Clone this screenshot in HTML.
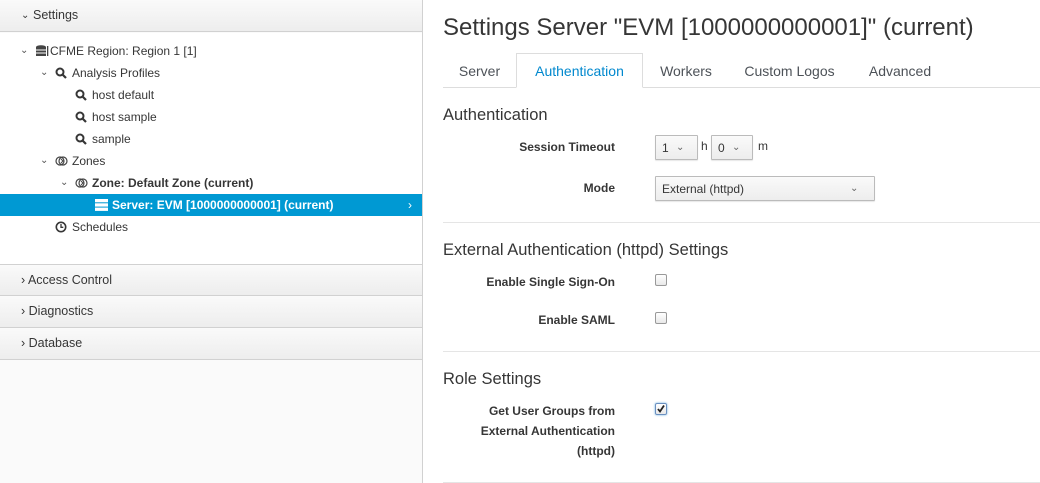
<!DOCTYPE html>
<html><head><style>
*{box-sizing:border-box;margin:0;padding:0}
body{width:1040px;height:483px;overflow:hidden;font-family:"Liberation Sans",sans-serif;font-size:12px;color:#363636;background:#fff;position:relative}
.left{position:absolute;left:0;top:0;width:423px;height:483px;background:#fafafa;border-right:1px solid #d1d1d1}
.hdr{position:absolute;left:0;width:422px;height:32px;background:linear-gradient(#fafafa,#ededed);border-bottom:1px solid #d1d1d1;line-height:31px;padding-left:21px;font-size:12.5px;color:#363636}
.hdr.t{border-top:1px solid #d1d1d1}
.tree{position:absolute;left:0;top:33px;width:422px;height:231px;background:#fff}
.row{position:absolute;left:0;width:422px;height:22px;line-height:22px;font-size:12px;white-space:nowrap}
.row svg{vertical-align:middle}
.sel{background:#0099d3;color:#fff;font-weight:bold}
.a{position:absolute;font-size:12px}
.ab{position:absolute;font-weight:bold;font-size:12px;text-align:right}
h1{position:absolute;left:443px;top:14px;font-weight:normal;font-size:24px;color:#363636;white-space:nowrap}
.tabs{position:absolute;left:443px;top:53px;width:597px;height:35px;border-bottom:1px solid #ddd}
.tab{position:absolute;top:1px;height:35px;line-height:35px;font-size:14px;color:#4d5258;text-align:center}
.tab.on{top:0;background:#fff;border:1px solid #ddd;border-bottom:1px solid #fff;color:#0088ce;height:35px}
h3{position:absolute;left:443px;font-weight:normal;font-size:16.5px;color:#363636}
.sl{position:absolute;height:25px;border:1px solid #bbb;border-radius:1px;background:linear-gradient(#fafafa,#ededed);box-shadow:0 1px 1px rgba(0,0,0,.1);line-height:24px;padding-left:6px;font-size:12px}
.sl i{position:absolute;top:0;font-style:normal;font-size:10px;color:#666}
.hr{position:absolute;left:443px;width:597px;height:1px;background:#e5e5e5}
.cb{position:absolute;width:12px;height:12px;border:1px solid #999;border-radius:2px;background:linear-gradient(#fff,#e8e8e8)}
</style></head><body>
<div class="left">
 <div class="hdr" style="top:0"><span style="font-size:10px;position:absolute;left:21px;top:0">&#8964;</span><span style="padding-left:12px">Settings</span></div>
 <div class="tree">
  <div class="row" style="top:7px"><span style="position:absolute;left:20px;font-size:10px;color:#555">&#8964;</span><svg style="position:absolute;left:35px;top:5px" width="14" height="12" viewBox="0 0 14 12"><ellipse cx="6" cy="2" rx="5" ry="1.8" fill="#444"/><rect x="1" y="2" width="10" height="9" fill="#444"/><path d="M1 5h10M1 8h10" stroke="#fff" stroke-width="1"/><rect x="12" y="1" width="1.3" height="10" fill="#444"/></svg><span style="position:absolute;left:50px">CFME Region: Region 1 [1]</span></div>
  <div class="row" style="top:29px"><span style="position:absolute;left:40px;font-size:10px;color:#555">&#8964;</span><svg style="position:absolute;left:55px;top:5px" width="12" height="12" viewBox="0 0 12 12"><circle cx="5" cy="5" r="3.5" fill="none" stroke="#363636" stroke-width="2"/><path d="M7.5 7.5l3.5 3.5" stroke="#363636" stroke-width="2.2"/></svg><span style="position:absolute;left:72px">Analysis Profiles</span></div>
  <div class="row" style="top:51px"><svg style="position:absolute;left:75px;top:5px" width="12" height="12" viewBox="0 0 12 12"><circle cx="5" cy="5" r="3.5" fill="none" stroke="#363636" stroke-width="2"/><path d="M7.5 7.5l3.5 3.5" stroke="#363636" stroke-width="2.2"/></svg><span style="position:absolute;left:92px">host default</span></div>
  <div class="row" style="top:73px"><svg style="position:absolute;left:75px;top:5px" width="12" height="12" viewBox="0 0 12 12"><circle cx="5" cy="5" r="3.5" fill="none" stroke="#363636" stroke-width="2"/><path d="M7.5 7.5l3.5 3.5" stroke="#363636" stroke-width="2.2"/></svg><span style="position:absolute;left:92px">host sample</span></div>
  <div class="row" style="top:95px"><svg style="position:absolute;left:75px;top:5px" width="12" height="12" viewBox="0 0 12 12"><circle cx="5" cy="5" r="3.5" fill="none" stroke="#363636" stroke-width="2"/><path d="M7.5 7.5l3.5 3.5" stroke="#363636" stroke-width="2.2"/></svg><span style="position:absolute;left:92px">sample</span></div>
  <div class="row" style="top:117px"><span style="position:absolute;left:40px;font-size:10px;color:#555">&#8964;</span><svg style="position:absolute;left:55px;top:5px" width="13" height="12" viewBox="0 0 13 12"><circle cx="5" cy="6" r="4" fill="none" stroke="#444" stroke-width="1.2"/><circle cx="8" cy="6" r="4" fill="none" stroke="#444" stroke-width="1.2"/><path d="M6 4l2 2-2 2" fill="none" stroke="#444"/></svg><span style="position:absolute;left:72px">Zones</span></div>
  <div class="row" style="top:139px;font-weight:bold"><span style="position:absolute;left:60px;font-size:10px;color:#555;font-weight:normal">&#8964;</span><svg style="position:absolute;left:75px;top:5px" width="13" height="12" viewBox="0 0 13 12"><circle cx="5" cy="6" r="4" fill="none" stroke="#444" stroke-width="1.2"/><circle cx="8" cy="6" r="4" fill="none" stroke="#444" stroke-width="1.2"/><path d="M6 4l2 2-2 2" fill="none" stroke="#444"/></svg><span style="position:absolute;left:92px">Zone: Default Zone (current)</span></div>
  <div class="row sel" style="top:161px"><svg style="position:absolute;left:95px;top:5px" width="13" height="12" viewBox="0 0 13 12"><rect x="0" y="0" width="13" height="3.3" fill="#fff"/><rect x="0" y="4.3" width="13" height="3.3" fill="#fff"/><rect x="0" y="8.6" width="13" height="3.3" fill="#fff"/></svg><span style="position:absolute;left:112px">Server: EVM [1000000000001] (current)</span><span style="position:absolute;left:408px;font-weight:normal">&#8250;</span></div>
  <div class="row" style="top:183px"><svg style="position:absolute;left:55px;top:5px" width="12" height="12" viewBox="0 0 12 12"><circle cx="6" cy="6" r="4.7" fill="none" stroke="#363636" stroke-width="1.6"/><path d="M6 3v3.3h2.3" fill="none" stroke="#363636" stroke-width="1.3"/></svg><span style="position:absolute;left:72px">Schedules</span></div>
 </div>
 <div class="hdr t" style="top:264px">&#8250; Access Control</div>
 <div class="hdr" style="top:296px">&#8250; Diagnostics</div>
 <div class="hdr" style="top:328px">&#8250; Database</div>
</div>

<h1>Settings Server "EVM [1000000000001]" (current)</h1>
<div class="tabs">
 <div class="tab" style="left:0;width:73px">Server</div>
 <div class="tab on" style="left:73px;width:127px">Authentication</div>
 <div class="tab" style="left:200px;width:86px">Workers</div>
 <div class="tab" style="left:286px;width:121px">Custom Logos</div>
 <div class="tab" style="left:407px;width:100px">Advanced</div>
</div>

<h3 style="top:106px">Authentication</h3>
<div class="ab" style="left:443px;width:172px;top:140px">Session Timeout</div>
<div class="sl" style="left:655px;top:135px;width:43px">1<i style="left:20px">&#8964;</i></div>
<span class="a" style="left:701px;top:139px">h</span>
<div class="sl" style="left:711px;top:135px;width:42px">0<i style="left:20px">&#8964;</i></div>
<span class="a" style="left:758px;top:139px">m</span>
<div class="ab" style="left:443px;width:172px;top:181px">Mode</div>
<div class="sl" style="left:655px;top:176px;width:220px">External (httpd)<i style="left:194px">&#8964;</i></div>
<div class="hr" style="top:222px"></div>

<h3 style="top:241px">External Authentication (httpd) Settings</h3>
<div class="ab" style="left:443px;width:172px;top:275px">Enable Single Sign-On</div>
<div class="cb" style="left:655px;top:274px"></div>
<div class="ab" style="left:443px;width:172px;top:313px">Enable SAML</div>
<div class="cb" style="left:655px;top:312px"></div>
<div class="hr" style="top:351px"></div>

<h3 style="top:370px">Role Settings</h3>
<div class="ab" style="left:443px;width:172px;top:401px;line-height:20px">Get User Groups from<br>External Authentication<br>(httpd)</div>
<div class="cb" style="left:655px;top:403px;border-color:#6a8fc0;box-shadow:0 0 2px #6ab0e0"><svg width="10" height="10" viewBox="0 0 10 10" style="position:absolute;left:0;top:0"><path d="M2 5l2 2.5 4-6" fill="none" stroke="#222" stroke-width="1.8"/></svg></div>
<div class="hr" style="top:482px"></div>
</body></html>
